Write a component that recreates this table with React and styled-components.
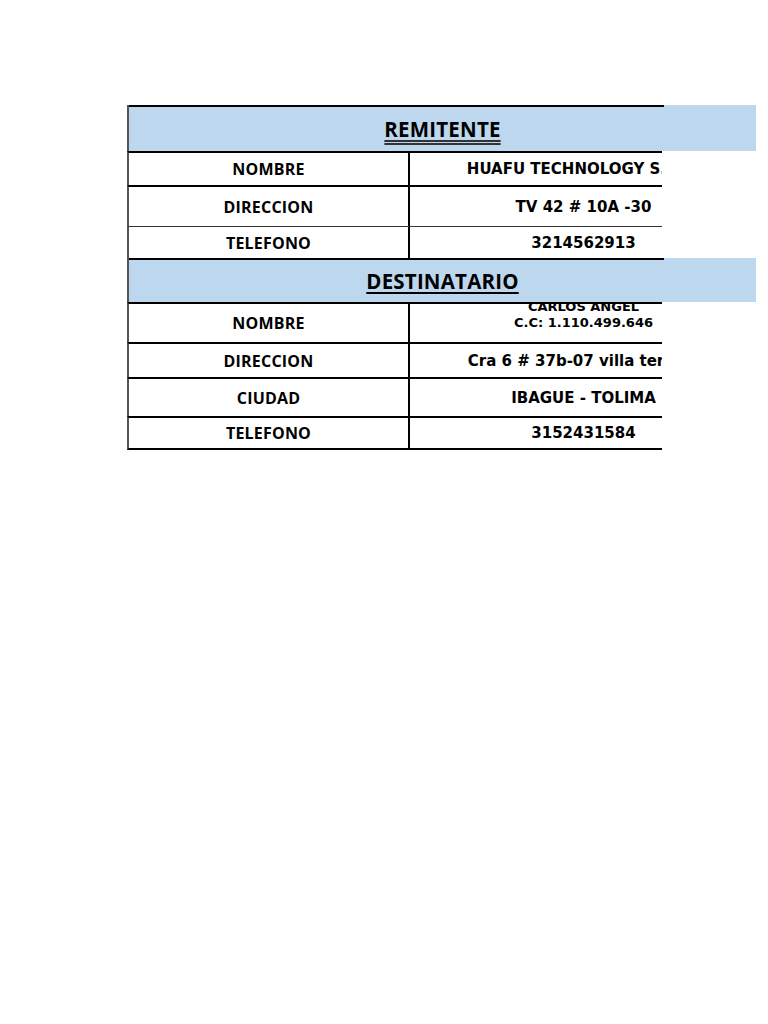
import React from 'react';
import styled, { createGlobalStyle } from 'styled-components';

const GlobalStyle = createGlobalStyle`
  html, body {
    margin: 0;
    padding: 0;
    background: #ffffff;
  }
  body {
    font-family: "DejaVu Sans", "Liberation Sans", sans-serif;
    color: #000;
  }
`;

const Page = styled.div`
  width: 768px;
  height: 1024px;
  padding: 105px 0 0 127px;
  box-sizing: border-box;
`;

const Sheet = styled.div`
  width: 629px;
  display: flex;
  flex-direction: column;
`;

const SectionHeader = styled.div`
  height: ${p => p.h}px;
  box-sizing: border-box;
  padding-top: 2px;
  border-left: 2px solid #555;
  background:
    linear-gradient(#000, #000) top left / 535px 2px no-repeat,
    #bdd7ee;
  display: flex;
  align-items: center;
  justify-content: center;
`;

const Title = styled.span`
  font-family: "Open Sans", "DejaVu Sans", sans-serif;
  font-weight: 700;
  font-size: 20.5px;
  letter-spacing: 0.2px;
  text-decoration: underline;
  text-decoration-style: ${p => (p.double ? 'double' : 'solid')};
  text-decoration-thickness: ${p => (p.double ? '1.5px' : '2px')};
  text-underline-offset: 3px;
  text-decoration-color: ${p => (p.double ? '#333' : '#000')};
`;

const Row = styled.div`
  width: 535px;
  height: ${p => p.h}px;
  box-sizing: border-box;
  display: flex;
  border-left: 2px solid #555;
  border-top: ${p => (p.thin ? '1px solid #333' : '2px solid #000')};
  border-bottom: ${p => (p.last ? '2px solid #000' : 'none')};
`;

const LabelCell = styled.div`
  width: 279px;
  flex-shrink: 0;
  border-right: 2px solid #000;
  display: flex;
  align-items: center;
  justify-content: center;
  font-family: "Open Sans", "DejaVu Sans", sans-serif;
  font-weight: 700;
  font-size: 16px;
  letter-spacing: 0.2px;
`;

const ValueCell = styled.div`
  flex: 1;
  overflow: hidden;
  display: flex;
  align-items: center;
`;

const ValueText = styled.div`
  width: 347px;
  flex-shrink: 0;
  text-align: center;
  white-space: nowrap;
  font-weight: 700;
  font-size: ${p => (p.small ? 13 : 15)}px;
  line-height: ${p => (p.small ? 16 : 18)}px;
  margin-bottom: ${p => (p.small ? 16 : 0)}px;
`;

const remitente = [
  { label: 'NOMBRE', value: 'HUAFU TECHNOLOGY S.A.S.', h: 34 },
  { label: 'DIRECCION', value: 'TV 42 # 10A -30', h: 41 },
  { label: 'TELEFONO', value: '3214562913', h: 32, thin: true },
];

const destinatario = [
  { label: 'NOMBRE', value: ['CARLOS ANGEL', 'C.C: 1.110.499.646'], h: 40 },
  { label: 'DIRECCION', value: 'Cra 6 # 37b-07 villa teresa.', h: 35 },
  { label: 'CIUDAD', value: 'IBAGUE - TOLIMA', h: 39 },
  { label: 'TELEFONO', value: '3152431584', h: 34, last: true },
];

function DataRow({ label, value, h, thin, last }) {
  const multi = Array.isArray(value);
  return (
    <Row h={h} thin={thin} last={last}>
      <LabelCell>{label}</LabelCell>
      <ValueCell>
        <ValueText small={multi}>
          {multi ? value.map(v => <div key={v}>{v}</div>) : value}
        </ValueText>
      </ValueCell>
    </Row>
  );
}

export default function App() {
  return (
    <>
      <GlobalStyle />
      <Page>
        <Sheet>
          <SectionHeader h={46}>
            <Title double>REMITENTE</Title>
          </SectionHeader>
          {remitente.map(r => <DataRow key={r.label} {...r} />)}
          <SectionHeader h={44}>
            <Title>DESTINATARIO</Title>
          </SectionHeader>
          {destinatario.map(r => <DataRow key={r.label} {...r} />)}
        </Sheet>
      </Page>
    </>
  );
}
